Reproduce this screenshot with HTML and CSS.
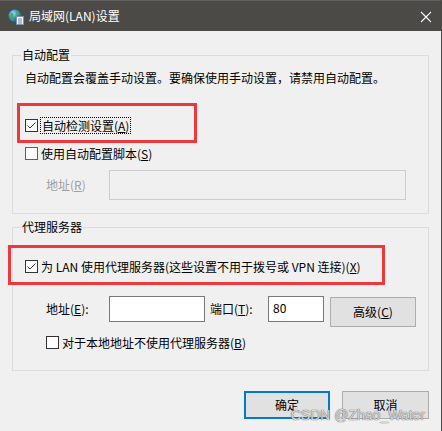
FILE: index.html
```html
<!DOCTYPE html>
<html lang="zh-CN">
<head>
<meta charset="utf-8">
<title>局域网(LAN)设置</title>
<link rel="stylesheet" href="styles.css">
</head>
<body>
<div class="window">
  <div class="titlebar">
    <svg class="app-icon" width="16" height="16" viewBox="0 0 16 16">
      <defs>
        <radialGradient id="g" cx="0.35" cy="0.3" r="0.8">
          <stop offset="0" stop-color="#9fe0ff"/>
          <stop offset="0.45" stop-color="#2f8fd8"/>
          <stop offset="1" stop-color="#134f9a"/>
        </radialGradient>
      </defs>
      <circle cx="7" cy="7" r="6.5" fill="url(#g)"/>
      <path d="M3 4 C5 3 6 5 5 7 C4 9 6 10 5 12 C3 11 1.5 8 3 4Z" fill="#4caf3c"/>
      <path d="M8 2 C10 2 12 4 11 6 C9 6 8 4 8 2Z" fill="#4caf3c"/>
      <rect x="8.5" y="7.5" width="7" height="8" fill="#f4f8fc" stroke="#7c8fa8"/>
      <path d="M10 10h4M10 12h4M10 14h4" stroke="#3a6fb5" stroke-width="0.8"/>
    </svg>
    <span class="title">局域网(LAN)设置</span>
    <svg class="close" width="12" height="12" viewBox="0 0 12 12">
      <path d="M1 1L11 11M11 1L1 11" stroke="#ffffff" stroke-width="1.1"/>
    </svg>
  </div>

  <div class="content">
    <fieldset class="group group-auto">
      <legend>自动配置</legend>
      <p class="desc">自动配置会覆盖手动设置。要确保使用手动设置，请禁用自动配置。</p>
      <div class="mark mark-auto">
        <div class="check">
          <span class="box box-checked">
            <svg width="11" height="11" viewBox="0 0 11 11"><path d="M1.5 5.5L4 8L9.5 2.5" fill="none" stroke="#333" stroke-width="1"/></svg>
          </span>
          <span class="focus">自动检测设置(<u>A</u>)</span>
        </div>
      </div>
      <div class="check check-script">
        <span class="box box-hover"></span>
        <span class="check-text">使用自动配置脚本(<u>S</u>)</span>
      </div>
      <div class="field-row field-row-script">
        <span class="field-label disabled">地址(<u>R</u>)</span>
        <span class="input input-disabled"></span>
      </div>
    </fieldset>

    <fieldset class="group group-proxy">
      <legend>代理服务器</legend>
      <div class="mark mark-proxy">
        <div class="check">
          <span class="box box-checked">
            <svg width="11" height="11" viewBox="0 0 11 11"><path d="M1.5 5.5L4 8L9.5 2.5" fill="none" stroke="#333" stroke-width="1"/></svg>
          </span>
          <span class="check-text">为 LAN 使用代理服务器(这些设置不用于拨号或 VPN 连接)(<u>X</u>)</span>
        </div>
      </div>
      <div class="field-row field-row-proxy">
        <span class="field-label">地址(<u>E</u>):</span>
        <span class="input input-addr"></span>
        <span class="field-label port-label">端口(<u>T</u>):</span>
        <span class="input input-port">80</span>
        <span class="button button-adv">高级(<u>C</u>)</span>
      </div>
      <div class="check check-local">
        <span class="box"></span>
        <span class="check-text">对于本地地址不使用代理服务器(<u>B</u>)</span>
      </div>
    </fieldset>

    <div class="actions">
      <span class="button button-ok">确定</span>
      <span class="button button-cancel">取消</span>
    </div>
  </div>
  <div class="watermark">CSDN @Zhao_Water</div>
</div>
</body>
</html>
```

FILE: styles.css
```css
html, body {
  margin: 0;
  padding: 0;
}

body {
  font-family: "Noto Sans CJK SC", "Noto Sans", sans-serif;
  font-size: 12px;
  line-height: 16px;
  color: #000;
}

.window {
  position: relative;
  box-sizing: border-box;
  width: 442px;
  height: 431px;
  background: #f0f0f0;
  border-right: 1px solid #4a4a4a;
  overflow: hidden;
}

.titlebar {
  box-sizing: border-box;
  height: 31px;
  background: #4b4a47;
  border-top: 1px solid #626160;
  display: flex;
  align-items: center;
  padding-left: 8px;
  padding-right: 9px;
}

.app-icon {
  flex: none;
  margin-top: 1px;
}

.title {
  margin-left: 5px;
  color: #ffffff;
  font-size: 12px;
  flex: 1;
}

.close {
  flex: none;
  margin-top: 1px;
}

.content {
  padding: 0 12px;
}

.group {
  margin: 0;
  padding: 0;
  border: 1px solid #dcdcdc;
  min-inline-size: 0;
}

.group legend {
  margin-left: 8px;
  padding: 0 1px;
  line-height: 16px;
}

.group-auto {
  margin-top: 16px;
  padding-bottom: 13px;
}

.group-proxy {
  margin-top: 5px;
  padding-bottom: 19px;
}

.desc {
  margin: 7px 0 0 12px;
  white-space: nowrap;
}

.mark {
  box-sizing: border-box;
  border: 3px solid #ef383c;
  height: 40px;
}

.mark-auto {
  margin-top: 17px;
  margin-left: 4px;
  width: 180px;
  padding-top: 11px;
  padding-left: 5px;
}

.mark-proxy {
  margin-top: 10px;
  margin-left: -5px;
  width: 377px;
  padding-top: 10px;
  padding-left: 14px;
}

.check {
  display: flex;
  align-items: center;
  height: 17px;
  white-space: nowrap;
}

.box {
  box-sizing: border-box;
  flex: none;
  width: 13px;
  height: 13px;
  border: 1px solid #333333;
  background: #ffffff;
  display: flex;
  align-items: center;
  justify-content: center;
}

.box-hover {
  border-color: #0078d7;
}

.check-text {
  margin-left: 3px;
}

.focus {
  margin-left: 2px;
  padding: 0 1px 0 1px;
  border: 1px dotted #000;
  line-height: 15px;
}

.check-script {
  margin-top: 2px;
  margin-left: 12px;
}

.field-row {
  display: flex;
  align-items: flex-start;
}

.field-row-script {
  margin-top: 8px;
  margin-left: 33px;
  align-items: center;
}

.field-label {
  width: 63px;
  flex: none;
  white-space: nowrap;
}

.disabled {
  color: #a0a0a0;
}

.input {
  box-sizing: border-box;
  display: block;
  flex: none;
  border: 1px solid #7a7a7a;
  background: #ffffff;
  height: 26px;
}

.input-disabled {
  width: 297px;
  height: 30px;
  border-color: #cccccc;
  background: #f0f0f0;
}

.field-row-proxy {
  margin-top: 11px;
  margin-left: 33px;
}

.field-row-proxy .field-label {
  line-height: 26px;
}

.input-addr {
  width: 96px;
}

.port-label {
  width: 58px;
  margin-left: 5px;
}

.input-port {
  width: 56px;
  padding-left: 4px;
  line-height: 22px;
  font-size: 12px;
}

.button {
  box-sizing: border-box;
  display: flex;
  align-items: center;
  justify-content: center;
  flex: none;
  background: #e1e1e1;
  border: 1px solid #adadad;
}

.button-adv {
  width: 86px;
  height: 30px;
  margin-top: 1px;
  margin-left: 6px;
}

.check-local {
  margin-top: 7px;
  margin-left: 33px;
}

.actions {
  display: flex;
  justify-content: flex-end;
  gap: 12px;
  margin-top: 20px;
}

.button-ok {
  width: 86px;
  height: 28px;
  border: 2px solid #0078d7;
}

.button-cancel {
  width: 87px;
  height: 28px;
}

.watermark {
  position: absolute;
  right: 16px;
  bottom: 8px;
  font-family: "Liberation Sans", Arial, sans-serif;
  font-size: 14px;
  line-height: 16px;
  color: rgba(235, 235, 235, 0.85);
  text-shadow: 0 0 1px #6a6a6a, 0 0 1px #6a6a6a;
}
```
